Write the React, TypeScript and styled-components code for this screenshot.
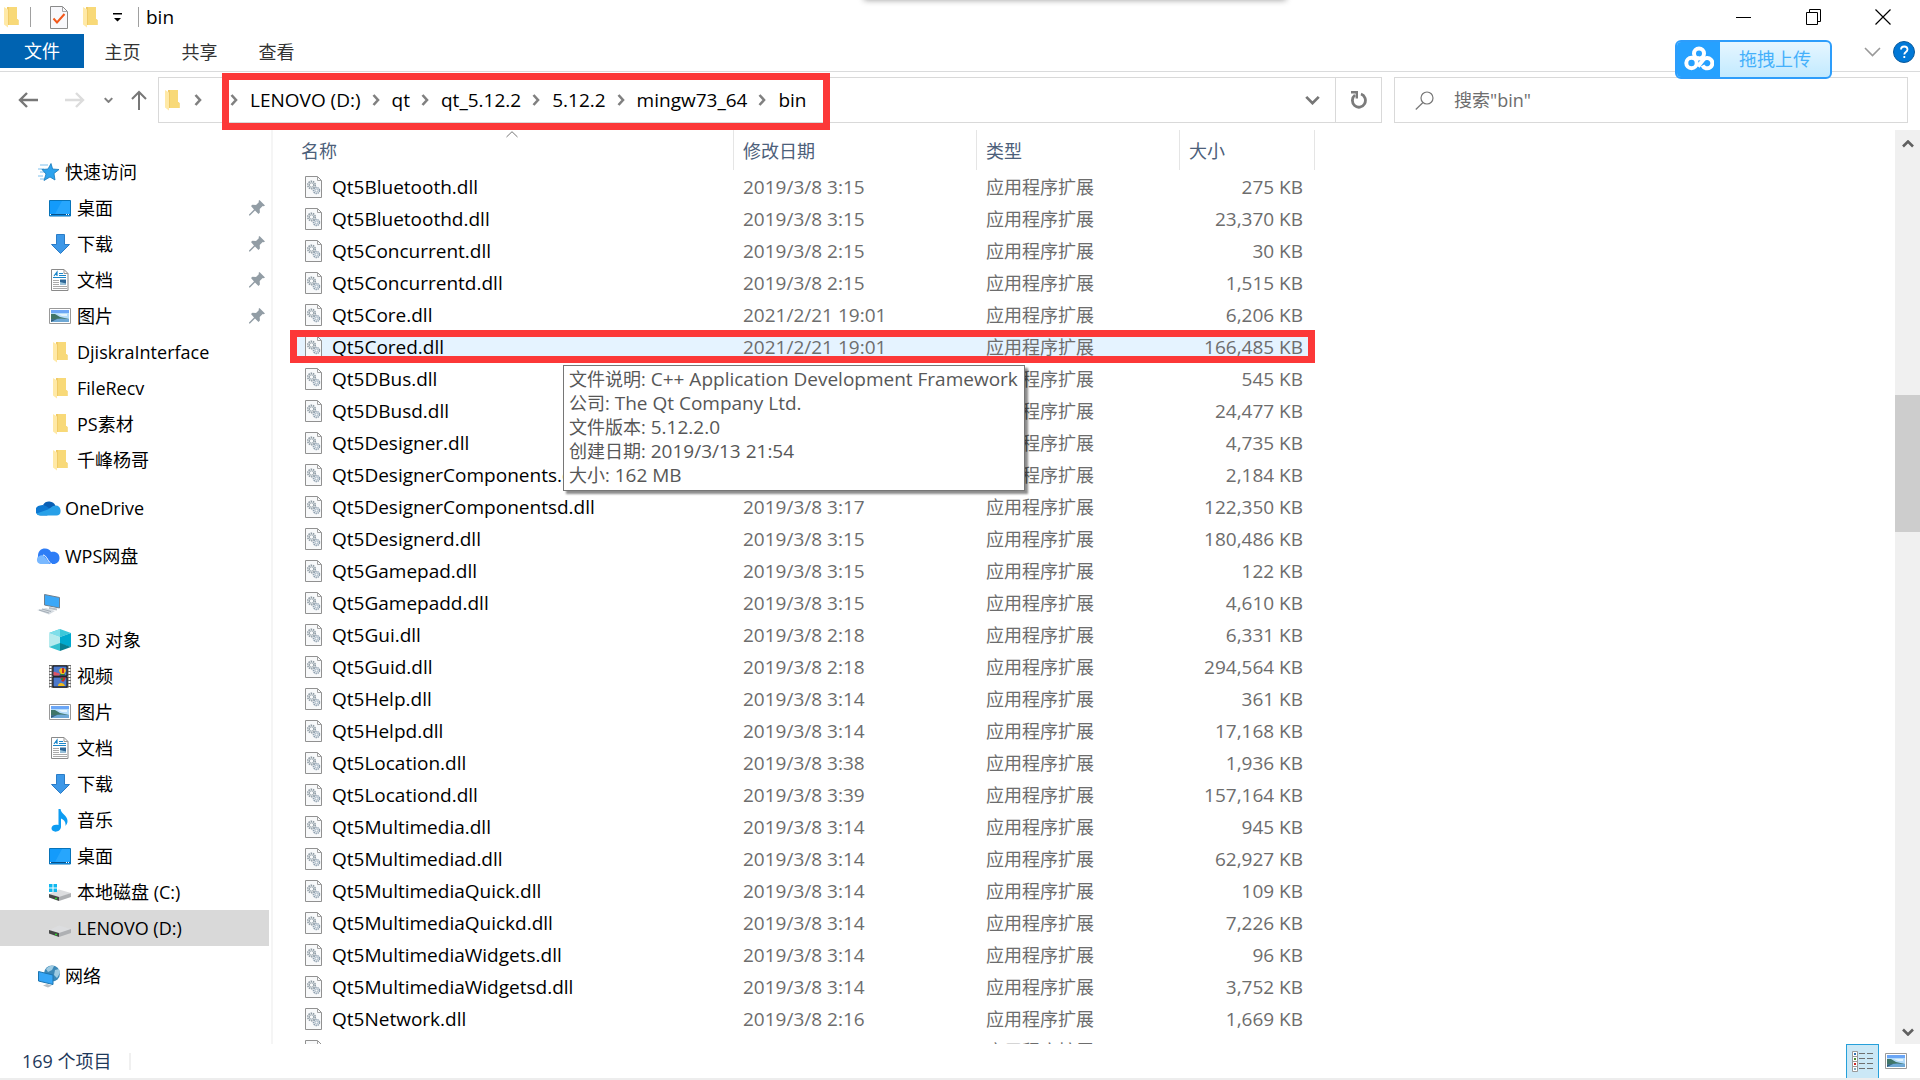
import React from "react";
import styled, { createGlobalStyle, css } from "styled-components";

const GlobalStyle = createGlobalStyle`
  * { box-sizing: border-box; }
  body {
    margin: 0;
    background: #fff;
    color: #000;
    font-family: "Open Sans", "Noto Sans CJK SC", sans-serif;
    font-size: 18px;
    line-height: 24px;
    overflow: hidden;
  }
  button, input { font: inherit; color: inherit; }
  button { padding: 0; border: 0; background: none; }
  svg { display: block; flex: none; }
`;

const RED = "#fc3838";
const LINE = "#d9d9d9";

const Window = styled.div`
  position: relative;
  display: flex;
  flex-direction: column;
  height: 100vh;
  border-bottom: 2px solid #ededed;
`;

const TopShadow = styled.div`
  position: absolute;
  top: -10px;
  left: 45%;
  width: 22%;
  height: 10px;
  box-shadow: 0 0 6px rgba(0, 0, 0, 0.4);
`;

const TitleBar = styled.header`
  display: flex;
  align-items: center;
  height: 34px;
  padding: 0 2px 0 4px;
`;

const Rule = styled.span<{ $left: number; $right: number }>`
  width: 1px;
  height: 20px;
  margin: 0 ${(p) => p.$right}px 0 ${(p) => p.$left}px;
  background: #a0a0a0;
`;

const QuickTools = styled.div`
  display: flex;
  align-items: center;
  gap: 15px;
`;

const WindowTitle = styled.h1`
  flex: 1;
  margin: 0;
  font-size: 19px;
  font-weight: 400;
`;

const WindowButtons = styled.div`
  display: flex;
  button {
    display: grid;
    place-items: center;
    width: 70px;
    height: 34px;
  }
`;

const Ribbon = styled.nav`
  display: flex;
  align-items: flex-start;
  height: 38px;
  border-bottom: 1px solid #dadbdc;
`;

const Tab = styled.button<{ $main?: boolean }>`
  width: ${(p) => (p.$main ? 84 : 77)}px;
  height: 34px;
  padding-top: ${(p) => (p.$main ? 0 : 2)}px;
  color: ${(p) => (p.$main ? "#fff" : "#333")};
  background: ${(p) => (p.$main ? "#0063b1" : "none")};
`;

const RibbonEnd = styled.div`
  display: flex;
  align-items: center;
  gap: 12px;
  height: 36px;
  margin-left: auto;
  padding-right: 5px;
`;

const Upload = styled.button`
  position: relative;
  display: flex;
  align-items: stretch;
  width: 157px;
  height: 39px;
  margin: 14px 20px 0 0;
  border: 2px solid #2d9dfb;
  border-radius: 6px;
  overflow: hidden;
  background: linear-gradient(#e6f6ff, #c2eaff);
  color: #45b0fb;
  z-index: 1;
`;

const UploadLogo = styled.span`
  display: grid;
  place-items: center;
  width: 43px;
  background: #26a1ff;
`;

const UploadText = styled.span`
  flex: 1;
  align-self: center;
`;

const NavBar = styled.div`
  display: flex;
  align-items: center;
  height: 58px;
  padding: 5px 12px 7px 18px;
`;

const History = styled.div`
  display: flex;
  align-items: center;
  width: 140px;
`;

const HistoryButton = styled.button<{ $gap: number }>`
  margin-right: ${(p) => p.$gap}px;
`;

const AddressBox = styled.div`
  display: flex;
  flex: 1;
  align-items: center;
  height: 46px;
  border: 1px solid ${LINE};
`;

const AddressRoot = styled.div`
  display: flex;
  align-items: center;
  gap: 14px;
  width: 63px;
  padding-left: 6px;
`;

const Crumbs = styled.ol`
  position: relative;
  display: flex;
  align-items: center;
  height: 44px;
  margin: 0;
  padding: 0 23px 0 8px;
  list-style: none;
  font-size: 19px;
  &::after {
    content: "";
    position: absolute;
    inset: -5px 0 -8px;
    border: 7px solid ${RED};
    pointer-events: none;
  }
  li {
    display: flex;
    align-items: center;
  }
  li + li { margin-left: 11px; }
  button { margin-left: 12px; }
`;

const AddressArrow = styled.button`
  display: grid;
  place-items: center;
  width: 46px;
  height: 44px;
  margin-left: auto;
`;

const Refresh = styled.button`
  display: grid;
  place-items: center;
  width: 46px;
  height: 44px;
  border-left: 1px solid ${LINE};
`;

const SearchBox = styled.label`
  display: flex;
  align-items: center;
  gap: 20px;
  width: 514px;
  height: 46px;
  margin-left: 12px;
  padding-left: 20px;
  border: 1px solid ${LINE};
  input {
    flex: 1;
    padding: 0;
    border: 0;
    outline: 0;
    background: none;
  }
  input::placeholder { color: #6d6d6d; opacity: 1; }
`;

const Body = styled.div`
  display: flex;
  flex: 1;
  min-height: 0;
`;

const Sidebar = styled.aside`
  width: 273px;
  padding: 24px 2px 0 0;
  border-right: 2px solid #f5f5f5;
`;

const Group = styled.ul`
  margin: 0 0 12px;
  padding: 0;
  list-style: none;
`;

const Place = styled.a<{ $child?: boolean; $current?: boolean }>`
  display: flex;
  align-items: center;
  gap: ${(p) => (p.$child ? 6 : 4)}px;
  height: 36px;
  padding: 0 4px 0 ${(p) => (p.$child ? 49 : 36)}px;
  color: #000;
  text-decoration: none;
  background: ${(p) => (p.$current ? "#d9d9d9" : "none")};
  svg:last-child:not(:first-child) { margin-left: auto; }
`;

const PlaceIcon = styled.span<{ $wide?: boolean }>`
  display: grid;
  flex: none;
  place-items: center;
  width: ${(p) => (p.$wide ? 25 : 22)}px;
`;

const Files = styled.main`
  flex: 1;
  min-width: 0;
  padding-left: 17px;
  overflow: hidden;
`;

const FileTable = styled.table`
  width: 1025px;
  table-layout: fixed;
  border-collapse: separate;
  border-spacing: 0;
  color: #6d6d6d;
`;

const Head = styled.th`
  position: relative;
  height: 41px;
  padding: 0 0 0 ${(p) => (p.id === "name" ? 11 : 9)}px;
  color: #4c607a;
  font-weight: 400;
  text-align: left;
  background: linear-gradient(#e5e5e5, #e5e5e5) right top / 1px 40px no-repeat;
`;

const SortMark = styled.span`
  position: absolute;
  top: 1px;
  left: 50%;
  margin-left: -6px;
`;

const Row = styled.tr<{ $marked?: boolean }>`
  position: relative;
  height: 32px;
  ${(p) =>
    p.$marked &&
    css`
      background: #e5f3ff;
      &::after {
        content: "";
        position: absolute;
        inset: -1px 0 0;
        border: 7px solid ${RED};
      }
    `}
`;

const Cell = styled.td<{ $right?: boolean; $cjk?: boolean }>`
  height: 32px;
  padding: 0 ${(p) => (p.$right ? 12 : 0)}px 0 9px;
  font-size: ${(p) => (p.$cjk ? 18 : 19)}px;
  text-align: ${(p) => (p.$right ? "right" : "left")};
  white-space: nowrap;
`;

const FileName = styled.div`
  display: flex;
  align-items: center;
  gap: 10px;
  padding-left: 6px;
  color: #000;
`;

const Tip = styled.div`
  position: absolute;
  z-index: 2;
  top: 365px;
  left: 563px;
  padding: 1px 6px 3px 5px;
  border: 1px solid #767676;
  background: #fff;
  color: #575757;
  white-space: nowrap;
  box-shadow: 3px 3px 2px rgba(0, 0, 0, 0.45);
`;

const TipLine = styled.div`
  display: flex;
  align-items: baseline;
  gap: 5px;
  height: 24px;
`;

const TipValue = styled.span`
  font-size: 19px;
`;

const ScrollBar = styled.div`
  display: flex;
  flex-direction: column;
  align-items: center;
  justify-content: space-between;
  width: 25px;
  padding: 10px 0 8px;
  background: #f0f0f0;
`;

const ScrollTrack = styled.div`
  flex: 1;
  width: 25px;
  padding-top: 247px;
`;

const Thumb = styled.div`
  height: 137px;
  background: #cdcdcd;
`;

const StatusBar = styled.footer`
  display: flex;
  align-items: center;
  height: 34px;
  padding-left: 22px;
  color: #1e395b;
`;

const StatusRule = styled.span`
  width: 2px;
  height: 17px;
  margin-left: 17px;
  background: #f0f0f0;
`;

const ViewButton = styled.button<{ $on?: boolean }>`
  display: grid;
  place-items: center;
  width: 33px;
  height: 34px;
  border: ${(p) => (p.$on ? "1px solid #26a0da" : "0")};
  border-bottom: 0;
  background: ${(p) => (p.$on ? "#cbe8f6" : "none")};
`;

const ViewButtons = styled.div`
  display: flex;
  margin-left: auto;
  padding-right: 8px;
`;

const FolderIcon = () => (
  <svg width="15" height="22" viewBox="0 0 15 22">
    <path d="M3 1h10v12l1.500 1v5H3z" fill="#f0cb68" />
    <path d="M5 1h8v12l1.500 1v5H5z" fill="#f8d978" />
    <path d="M0 1l4 2.500v18L0 18.500z" fill="#ffe9a6" />
  </svg>
);

const CheckDocIcon = () => (
  <svg width="18" height="23" viewBox="0 0 18 23" fill="none">
    <path d="M.5.5h12l5 5v17H.5z" fill="#f8f8fb" stroke="#8a8a8a" />
    <path d="M12.500.5v5h5" stroke="#a5a5a5" />
    <path d="M3.500 12.500l3.500 4 7.500-8.500" stroke="#f2581b" strokeWidth="2" />
  </svg>
);

const ChevronIcon = ({ size = 8, dir = "right", color = "#808080", weight = 2.6 }: { size?: number; dir?: "right" | "down" | "up"; color?: string; weight?: number }) => {
  const right = dir === "right";
  const d = right ? "M1.500 1l4.500 5-4.500 5" : dir === "down" ? "M1 1.500l5 5 5-5" : "M1 6.500l5-5 5 5";
  return (
    <svg width={right ? size : size * 1.5} height={right ? size * 1.5 : size} viewBox={right ? "0 0 8 12" : "0 0 12 8"} fill="none" stroke={color} strokeWidth={weight}>
      <path d={d} />
    </svg>
  );
};

const ArrowIcon = ({ color, flip }: { color: string; flip?: boolean }) => (
  <svg width="20" height="16" viewBox="0 0 20 16" fill="none" stroke={color} strokeWidth="2.400">
    <path d={flip ? "M0 8h18M11 1l7 7-7 7" : "M20 8H2M9 1L2 8l7 7"} />
  </svg>
);

const UpIcon = () => (
  <svg width="16" height="20" viewBox="0 0 16 20" fill="none" stroke="#777" strokeWidth="2">
    <path d="M8 20V2M1 9l7-7 7 7" />
  </svg>
);

const RefreshIcon = () => (
  <svg width="17" height="20" viewBox="0 0 17 20" fill="none" stroke="#7b7b7b" strokeWidth="2.800">
    <path d="M11 4a6.500 6.800 0 1 1-6 1" />
    <path d="M1 2.200h5.800v6.300" strokeWidth="2.400" />
  </svg>
);

const SearchIcon = () => (
  <svg width="19" height="19" viewBox="0 0 19 19" fill="none" stroke="#777" strokeWidth="1.200">
    <circle cx="12" cy="7" r="6" />
    <path d="M8 11.500L.8 18.500" />
  </svg>
);

const CloudLoopIcon = () => (
  <svg width="30" height="26" viewBox="0 0 30 26" fill="none" stroke="#fff" strokeWidth="4">
    <circle cx="15" cy="7.500" r="5" />
    <circle cx="7.500" cy="17" r="5.200" />
    <path d="M11.500 13.500l4-1.500M18.500 19.500a5.200 5.200 0 1 0 .5-5.500l-5 6.500" />
  </svg>
);

const StarIcon = () => (
  <svg width="23" height="20" viewBox="0 0 23 20">
    <path d="M3 3h8M1 7h6M3 10h5M1 14h5M3 17h4" stroke="#7cc0ee" />
    <path d="M14 1.500l1.600 5.500 6.400.5-5 4 1 6.500-5-3-6 3.500 2-6.500L5 7.500l6-.5z" fill="#2da3ee" stroke="#1779ba" strokeWidth=".8" />
  </svg>
);

const DesktopIcon = () => (
  <svg width="22" height="17" viewBox="0 0 22 17">
    <path d="M.5.5h21v15.500H.5z" fill="#139bfb" stroke="#0873b8" />
    <path d="M13 1h8v13H6z" fill="#35adff" opacity=".6" />
    <path d="M1 14.500h20" stroke="#07518a" />
    <path d="M1 14.500h1M17 14.500h1M19 14.500h1" stroke="#fff" />
  </svg>
);

const DownIcon = () => (
  <svg width="19" height="20" viewBox="0 0 19 20">
    <path d="M5.500.5h8v10h5l-9 9-9-9h5z" fill="#3d98e8" stroke="#2a7cc7" />
  </svg>
);

const DocIcon = () => (
  <svg width="18" height="22" viewBox="0 0 18 22" fill="none">
    <path d="M.5.5h12.500l4 4v17H.5z" fill="#fff" stroke="#8a8a8a" />
    <path d="M13 .5v4h4" stroke="#999" />
    <path d="M3 7l3-4v4M4 5.500h2M8 4.500h4M8 6.500h7M2 8.500h13" stroke="#1a86c9" strokeWidth="1.200" />
    <path d="M2 11.500h6M2 13.500h6M2 15.500h6M2 17.500h14M2 19.500h14" stroke="#aaa" />
    <path d="M9 10.500h6v5H9z" fill="#2f6797" />
    <path d="M9 13l6 1.500v1H9z" fill="#9ac5dd" />
  </svg>
);

const PictureIcon = () => (
  <svg width="22" height="16" viewBox="0 0 22 16">
    <path d="M.5.5h21v15H.5z" fill="#fff" stroke="#999" />
    <path d="M2 2h18v12H2z" fill="#b4dcfa" />
    <path d="M2 2h18v3H2z" fill="#6ba6f6" />
    <path d="M2 6l4 0 5 3 9 2v1H2z" fill="#3f7568" />
    <path d="M2 11.500l10-1 8 .5v3H2z" fill="#6ea8d5" />
    <path d="M2 11.500l6-.5-6 3z" fill="#325d79" />
    <path d="M9 6h9v2h-5z" fill="#e4f3fc" />
  </svg>
);

const PinIcon = () => (
  <svg width="16" height="16" viewBox="0 0 16 16" fill="#929da5">
    <path d="M10.500 0L16 5.500l-1.300.8-1-.3-3 3 .2 3.500-1.400 1.400L6 10.500 1 15.500H0v-1L5 9.500 2 6l1.400-1.300 3.600.3 3-3-.5-1z" />
  </svg>
);

const OneDriveIcon = () => (
  <svg width="25" height="16" viewBox="0 0 25 16">
    <path d="M7 5a7 7 0 0 1 12.500 1l-7 5z" fill="#0a5fb4" />
    <path d="M5 15.500A5 5 0 0 1 4 5.500c3-1.500 6 0 8 2L18 11l-7 4.500z" fill="#0d78d1" />
    <path d="M12 9.500L17 6c4-1.500 7 0 7.500 4s-1.500 5.500-4 5.500H5c-2 0-4-1-4.500-2z" fill="#28a0e8" />
  </svg>
);

const WpsIcon = () => (
  <svg width="25" height="17" viewBox="0 0 25 17">
    <path d="M2 8C2 3 5 .5 9 .5c3 0 5 1.500 6 3.500 5-1 8.500 1.500 8.500 6 0 3.500-2.500 6-6 6H7c-4 0-6-4-5-8z" fill="#2e7df6" />
    <path d="M1 11c1-4 6-5 8-2l5 7H6c-3.500 0-5.500-2-5-5z" fill="#79b8ff" />
    <path d="M7 7c4 0 5 8 9 9" fill="none" stroke="#fff" />
  </svg>
);

const ComputerIcon = () => (
  <svg width="24" height="21" viewBox="0 0 24 21">
    <path d="M7.500.5L22.500 3.500v10.500L7.500 11z" fill="#3ba8f8" stroke="#6e7f8e" />
    <path d="M0 16l9-2 9 3-6 3.500z" fill="#d5dbe1" />
    <path d="M2 16l10 3M5 15l9 2.500" stroke="#a3adb6" />
    <path d="M12 14l8 1.500" stroke="#b8c0c6" strokeWidth="2" />
  </svg>
);

const CubeIcon = () => (
  <svg width="22" height="22" viewBox="0 0 22 22">
    <path d="M11 0l11 4-11 4L0 4z" fill="#3bc8da" />
    <path d="M11 0v8L0 4z" fill="#80deea" />
    <path d="M0 4l11 4v7L0 18z" fill="#b6ebee" />
    <path d="M22 4L11 8v7l11 3z" fill="#00a9ce" />
    <path d="M0 18l11-4v8z" fill="#35c0ce" />
    <path d="M22 18l-11-4v8z" fill="#087f91" />
  </svg>
);

const VideoIcon = () => (
  <svg width="22" height="23" viewBox="0 0 22 23">
    <path d="M0 0h22v23H0z" fill="#666" />
    <path d="M1.500 1v22M20.500 1v22" stroke="#fff" strokeWidth="2" strokeDasharray="2 1" />
    <path d="M4 1h14v10H4zM4 12h14v10H4z" fill="#4d79ca" stroke="#111" />
    <path d="M4.500 6.500l6 2v2h-6z" fill="#df5464" />
    <path d="M10 6c0-4 7-4 7 0l-2 3h-3zM9 21c0-4 6-4 7 0z" fill="#f4bd19" />
    <path d="M13 3h2v5h-2z" fill="#c42c24" />
    <path d="M11 12.500h6l-2 4h-2z" fill="#c42c24" />
    <path d="M12 13h2v2h-2zM11 9h5v1h-5z" fill="#32823c" />
  </svg>
);

const MusicIcon = () => (
  <svg width="18" height="23" viewBox="0 0 18 23">
    <path d="M7.500 0h2c.5 5 7 6.500 7 12 0 2-.8 3.500-2 5 .5-4-1.500-6.500-4.500-7.500v8.500c-.5 6-10 6-9.500 1 .2-3 4-4 7-3z" fill="#0d9cf2" />
  </svg>
);

const DriveIcon = ({ system }: { system?: boolean }) => (
  <svg width="22" height="18" viewBox="0 0 22 18">
    <path d="M0 11l10-4.500L22 10l-12 5z" fill="#dcdddf" />
    <path d="M10 14l12-4v4l-12 4z" fill="#aeb0b3" />
    <path d="M0 11l10 3v4L0 14.500z" fill="#454746" />
    <path d="M6 15.500h2" stroke="#2fd12c" strokeWidth="1.500" />
    {system && <path d="M0 1h3.500v3.500H0zM4.500 1H8v3.500H4.500zM0 5.500h3.500V9H0zM4.500 5.500H8V9H4.500z" fill="#10b7ef" />}
  </svg>
);

const NetworkIcon = () => (
  <svg width="22" height="23" viewBox="0 0 22 23">
    <circle cx="14" cy="8.500" r="8" fill="#3c88b7" />
    <path d="M8 4c2-3 6-4 8-3l-2 4-4 2zM17 5l4-1 1 4-3 5-3-3z" fill="#9ecbe2" />
    <path d="M.5 6.500L15 10v9.500L.5 16z" fill="#36a6f7" stroke="#1c74af" />
    <path d="M5 20.500l4-1.500 5 1.500-4 2z" fill="#b9c1c7" />
  </svg>
);

const GearFileIcon = () => (
  <svg width="17" height="22" viewBox="0 0 17 22" fill="none">
    <path d="M.5.5h12l4 4v17H.5z" fill="#f8f9fa" stroke="#919191" />
    <path d="M12.500.5v4h4" stroke="#a2a2a2" />
    <circle cx="6.500" cy="9" r="3.700" stroke="#8d9aa3" strokeWidth="1.600" strokeDasharray="1.500 .8" />
    <circle cx="6.500" cy="9" r="2.200" stroke="#9aa7af" />
    <circle cx="11.500" cy="14.500" r="3" stroke="#8d9fae" strokeWidth="1.500" strokeDasharray="1.400 .7" />
    <circle cx="11.500" cy="14.500" r="1.500" stroke="#a2b4c3" />
  </svg>
);

const DetailsIcon = () => (
  <svg width="22" height="22" viewBox="0 0 22 22" fill="none">
    <path d="M.5.500h5v5h-5zM.5 5.500h5v5h-5zM.5 10.500h5v5h-5zM.5 15.500h5v5h-5z" fill="#fff" stroke="#999" />
    <path d="M2 3h2" stroke="#3274b5" strokeWidth="2" />
    <path d="M2 8h2" stroke="#4c8e35" strokeWidth="2" />
    <path d="M2 13h2" stroke="#cc2828" strokeWidth="2" />
    <path d="M2 18h2" stroke="#79a9bd" strokeWidth="2" />
    <path d="M7 2.500h6M15 2.500h6M7 7.500h6M15 7.500h6M7 12.500h6M15 12.500h6M7 17.500h6M15 17.500h6" stroke="#707070" />
  </svg>
);

type PlaceItem = { label: string; icon: React.ReactNode; pinned?: boolean; current?: boolean };
type PlaceGroup = { head: PlaceItem; items?: PlaceItem[] };

const places: PlaceGroup[] = [
  {
    head: { label: "快速访问", icon: <StarIcon /> },
    items: [
      { label: "桌面", icon: <DesktopIcon />, pinned: true },
      { label: "下载", icon: <DownIcon />, pinned: true },
      { label: "文档", icon: <DocIcon />, pinned: true },
      { label: "图片", icon: <PictureIcon />, pinned: true },
      { label: "DjiskraInterface", icon: <FolderIcon /> },
      { label: "FileRecv", icon: <FolderIcon /> },
      { label: "PS素材", icon: <FolderIcon /> },
      { label: "千峰杨哥", icon: <FolderIcon /> },
    ],
  },
  { head: { label: "OneDrive", icon: <OneDriveIcon /> } },
  { head: { label: "WPS网盘", icon: <WpsIcon /> } },
  {
    head: { label: "", icon: <ComputerIcon /> },
    items: [
      { label: "3D 对象", icon: <CubeIcon /> },
      { label: "视频", icon: <VideoIcon /> },
      { label: "图片", icon: <PictureIcon /> },
      { label: "文档", icon: <DocIcon /> },
      { label: "下载", icon: <DownIcon /> },
      { label: "音乐", icon: <MusicIcon /> },
      { label: "桌面", icon: <DesktopIcon /> },
      { label: "本地磁盘 (C:)", icon: <DriveIcon system /> },
      { label: "LENOVO (D:)", icon: <DriveIcon />, current: true },
    ],
  },
  { head: { label: "网络", icon: <NetworkIcon /> } },
];

const files: [string, string, string][] = [
  ["Qt5Bluetooth.dll", "2019/3/8 3:15", "275 KB"],
  ["Qt5Bluetoothd.dll", "2019/3/8 3:15", "23,370 KB"],
  ["Qt5Concurrent.dll", "2019/3/8 2:15", "30 KB"],
  ["Qt5Concurrentd.dll", "2019/3/8 2:15", "1,515 KB"],
  ["Qt5Core.dll", "2021/2/21 19:01", "6,206 KB"],
  ["Qt5Cored.dll", "2021/2/21 19:01", "166,485 KB"],
  ["Qt5DBus.dll", "2019/3/8 2:15", "545 KB"],
  ["Qt5DBusd.dll", "2019/3/8 2:15", "24,477 KB"],
  ["Qt5Designer.dll", "2019/3/8 3:15", "4,735 KB"],
  ["Qt5DesignerComponents.dll", "2019/3/8 3:17", "2,184 KB"],
  ["Qt5DesignerComponentsd.dll", "2019/3/8 3:17", "122,350 KB"],
  ["Qt5Designerd.dll", "2019/3/8 3:15", "180,486 KB"],
  ["Qt5Gamepad.dll", "2019/3/8 3:15", "122 KB"],
  ["Qt5Gamepadd.dll", "2019/3/8 3:15", "4,610 KB"],
  ["Qt5Gui.dll", "2019/3/8 2:18", "6,331 KB"],
  ["Qt5Guid.dll", "2019/3/8 2:18", "294,564 KB"],
  ["Qt5Help.dll", "2019/3/8 3:14", "361 KB"],
  ["Qt5Helpd.dll", "2019/3/8 3:14", "17,168 KB"],
  ["Qt5Location.dll", "2019/3/8 3:38", "1,936 KB"],
  ["Qt5Locationd.dll", "2019/3/8 3:39", "157,164 KB"],
  ["Qt5Multimedia.dll", "2019/3/8 3:14", "945 KB"],
  ["Qt5Multimediad.dll", "2019/3/8 3:14", "62,927 KB"],
  ["Qt5MultimediaQuick.dll", "2019/3/8 3:14", "109 KB"],
  ["Qt5MultimediaQuickd.dll", "2019/3/8 3:14", "7,226 KB"],
  ["Qt5MultimediaWidgets.dll", "2019/3/8 3:14", "96 KB"],
  ["Qt5MultimediaWidgetsd.dll", "2019/3/8 3:14", "3,752 KB"],
  ["Qt5Network.dll", "2019/3/8 2:16", "1,669 KB"],
  ["Qt5Networkd.dll", "2019/3/8 2:16", "32,540 KB"],
];

const crumbs = ["LENOVO (D:)", "qt", "qt_5.12.2", "5.12.2", "mingw73_64", "bin"];

const details: [string, string][] = [
  ["文件说明:", "C++ Application Development Framework"],
  ["公司:", "The Qt Company Ltd."],
  ["文件版本:", "5.12.2.0"],
  ["创建日期:", "2019/3/13 21:54"],
  ["大小:", "162 MB"],
];

const PlaceLink = ({ item, child }: { item: PlaceItem; child?: boolean }) => (
  <li>
    <Place href="#" $child={child} $current={item.current} aria-label={item.label || "此电脑"}>
      <PlaceIcon $wide={!child}>{item.icon}</PlaceIcon>
      {item.label && <span>{item.label}</span>}
      {item.pinned && <PinIcon />}
    </Place>
  </li>
);

export default function App() {
  return (
    <Window>
      <GlobalStyle />
      <TopShadow />
      <TitleBar>
        <FolderIcon />
        <Rule $left={11} $right={19} />
        <QuickTools>
          <button aria-label="属性"><CheckDocIcon /></button>
          <button aria-label="新建文件夹"><FolderIcon /></button>
          <button aria-label="自定义快速访问工具栏">
            <svg width="9" height="9" viewBox="0 0 9 9"><path d="M0 0h9v1.500H0zM1 5h7L4.500 8.500z" /></svg>
          </button>
        </QuickTools>
        <Rule $left={16} $right={7} />
        <WindowTitle>bin</WindowTitle>
        <WindowButtons>
          <button aria-label="最小化"><svg width="15" height="15" stroke="#000"><path d="M0 7.500h15" /></svg></button>
          <button aria-label="还原"><svg width="15" height="16" fill="none" stroke="#000"><path d="M.5 3.500h11v12H.5zM3.500 3.500v-3h11v12h-3" /></svg></button>
          <button aria-label="关闭"><svg width="16" height="16" stroke="#000" strokeWidth="1.200"><path d="M.5.500l15 15M15.500.5l-15 15" /></svg></button>
        </WindowButtons>
      </TitleBar>
      <Ribbon>
        <Tab $main>文件</Tab>
        <Tab>主页</Tab>
        <Tab>共享</Tab>
        <Tab>查看</Tab>
        <RibbonEnd>
          <Upload>
            <UploadLogo><CloudLoopIcon /></UploadLogo>
            <UploadText>拖拽上传</UploadText>
          </Upload>
          <button aria-label="展开功能区">
            <svg width="17" height="10" viewBox="0 0 17 10" fill="none" stroke="#999" strokeWidth="1.600"><path d="M1 1l7.500 7.500L16 1" /></svg>
          </button>
          <button aria-label="帮助">
            <svg width="22" height="22" viewBox="0 0 22 22"><circle cx="11" cy="11" r="10.500" fill="#0078d7" stroke="#0a5a9c" /><path d="M8 8.500c0-4 6.500-4 6.500 0 0 2.500-3.200 2.500-3.200 5M11.300 15v2" fill="none" stroke="#fff" strokeWidth="1.800" /></svg>
          </button>
        </RibbonEnd>
      </Ribbon>
      <NavBar>
        <History>
          <HistoryButton $gap={27} aria-label="后退"><ArrowIcon color="#777" /></HistoryButton>
          <HistoryButton $gap={19} aria-label="前进"><ArrowIcon color="#dcdcdc" flip /></HistoryButton>
          <HistoryButton $gap={18} aria-label="最近位置"><ChevronIcon dir="down" size={6} weight={2.8} /></HistoryButton>
          <HistoryButton $gap={0} aria-label="上移"><UpIcon /></HistoryButton>
        </History>
        <AddressBox>
          <AddressRoot><FolderIcon /><ChevronIcon /></AddressRoot>
          <Crumbs>
            {crumbs.map((c) => (
              <li key={c}><ChevronIcon /><button>{c}</button></li>
            ))}
          </Crumbs>
          <AddressArrow aria-label="以前的位置"><ChevronIcon dir="down" size={10} color="#767676" weight={2.2} /></AddressArrow>
          <Refresh aria-label="刷新"><RefreshIcon /></Refresh>
        </AddressBox>
        <SearchBox>
          <SearchIcon />
          <input type="text" aria-label="搜索" placeholder={'搜索"bin"'} />
        </SearchBox>
      </NavBar>
      <Body>
        <Sidebar>
          {places.map((g, i) => (
            <Group key={i}>
              <PlaceLink item={g.head} />
              {g.items?.map((item) => <PlaceLink key={item.label} item={item} child />)}
            </Group>
          ))}
        </Sidebar>
        <Files>
          <FileTable>
            <colgroup>
              <col width="444" /><col width="243" /><col width="203" /><col width="135" />
            </colgroup>
            <thead>
              <tr>
                <Head id="name">名称<SortMark><svg width="12" height="7" fill="none" stroke="#777"><path d="M.5 6L6 .7 11.500 6" /></svg></SortMark></Head>
                <Head>修改日期</Head>
                <Head>类型</Head>
                <Head>大小</Head>
              </tr>
            </thead>
            <tbody>
              {files.map(([name, date, size]) => (
                <Row key={name} $marked={name === "Qt5Cored.dll"}>
                  <Cell><FileName><GearFileIcon />{name}</FileName></Cell>
                  <Cell>{date}</Cell>
                  <Cell $cjk>应用程序扩展</Cell>
                  <Cell $right>{size}</Cell>
                </Row>
              ))}
            </tbody>
          </FileTable>
        </Files>
        <ScrollBar>
          <ChevronIcon dir="up" size={8} color="#606060" />
          <ScrollTrack><Thumb /></ScrollTrack>
          <ChevronIcon dir="down" size={8} color="#606060" />
        </ScrollBar>
      </Body>
      <Tip role="tooltip">
        {details.map(([label, value]) => (
          <TipLine key={label}>
            <span>{label}</span>
            <TipValue>{value}</TipValue>
          </TipLine>
        ))}
      </Tip>
      <StatusBar>
        <span>169 个项目</span>
        <StatusRule />
        <ViewButtons>
          <ViewButton $on aria-label="详细信息"><DetailsIcon /></ViewButton>
          <ViewButton aria-label="大缩略图"><PictureIcon /></ViewButton>
        </ViewButtons>
      </StatusBar>
    </Window>
  );
}
